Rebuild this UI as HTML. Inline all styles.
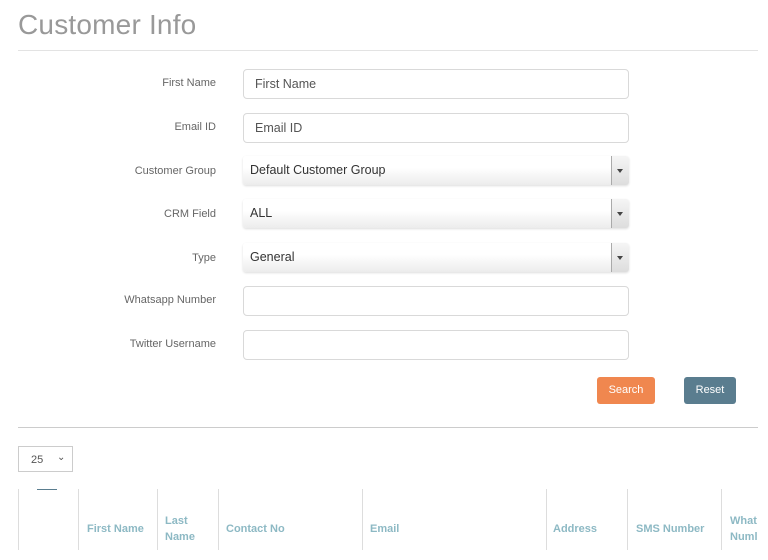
<!DOCTYPE html>
<html><head><style>
body{margin:0;width:768px;height:560px;overflow:hidden;background:#fff;font-family:"Liberation Sans",sans-serif;position:relative}
.a{position:absolute}
.t{left:18px;top:9px;font-size:28px;color:#999;font-weight:300;letter-spacing:.2px}
.hr{left:18px;width:740px;height:1px;background:#e3e3e3}
.lb{width:216px;text-align:right;font-size:11px;color:#666;left:0}
.in{left:243px;width:386px;height:30px;border:1px solid #d9d9d9;border-radius:4px;box-sizing:border-box;font-size:12.5px;color:#555;padding:7px 11px}
.sel{left:243px;width:386px;height:29px;border-radius:3px;background:linear-gradient(#fff 40%,#ececec);box-shadow:0 1px 2px #ddd;font-size:12.5px;color:#333;padding:7px 7px;box-sizing:border-box}
.ar{position:absolute;right:0;top:0;width:17px;height:29px;border-left:1px solid #aaa;background:linear-gradient(#f5f5f5,#ddd);border-radius:0 3px 3px 0}
.ar:after{content:"";position:absolute;left:5px;top:13px;border:3.5px solid transparent;border-top:4px solid #444}
.btn{height:27px;border-radius:3px;color:#fff;font-size:11px;text-align:center;line-height:26px}
.v{top:489px;width:1px;height:61px;background:#ddd}
.h{top:513px;font-size:11px;font-weight:bold;color:#8db9c4;line-height:16px}
</style></head><body>
<div class="a t">Customer Info</div>
<div class="a hr" style="top:50px"></div>
<div class="a lb" style="top:77px">First Name</div><div class="a in" style="top:69px">First Name</div>
<div class="a lb" style="top:121px">Email ID</div><div class="a in" style="top:113px">Email ID</div>
<div class="a lb" style="top:165px">Customer Group</div><div class="a sel" style="top:156px">Default Customer Group<div class="ar"></div></div>
<div class="a lb" style="top:208px">CRM Field</div><div class="a sel" style="top:199px">ALL<div class="ar"></div></div>
<div class="a lb" style="top:252px">Type</div><div class="a sel" style="top:243px">General<div class="ar"></div></div>
<div class="a lb" style="top:294px">Whatsapp Number</div><div class="a in" style="top:286px"></div>
<div class="a lb" style="top:338px">Twitter Username</div><div class="a in" style="top:330px"></div>
<div class="a btn" style="left:597px;top:377px;width:58px;background:#f0874f">Search</div>
<div class="a btn" style="left:684px;top:377px;width:52px;background:#5a7d8f">Reset</div>
<div class="a hr" style="top:427px;background:#ccc"></div>
<div class="a" style="left:18px;top:446px;width:55px;height:26px;border:1px solid #ccc;box-sizing:border-box;font-size:11px;color:#555;padding:7px 0 0 12px">25<span style="position:absolute;left:38px;top:5px;font-size:10px;color:#555">&#8964;</span></div>
<div class="a" style="left:37px;top:489px;width:20px;height:1px;background:#5a7d8f"></div>
<div class="a v" style="left:18px"></div><div class="a v" style="left:78px"></div><div class="a v" style="left:157px"></div><div class="a v" style="left:218px"></div><div class="a v" style="left:362px"></div><div class="a v" style="left:546px"></div><div class="a v" style="left:627px"></div><div class="a v" style="left:721px"></div>
<div class="a h" style="left:87px;top:521px">First Name</div>
<div class="a h" style="left:165px">Last<br>Name</div>
<div class="a h" style="left:226px;top:521px">Contact No</div>
<div class="a h" style="left:370px;top:521px">Email</div>
<div class="a h" style="left:553px;top:521px">Address</div>
<div class="a h" style="left:636px;top:521px">SMS Number</div>
<div class="a h" style="left:730px;white-space:nowrap">What<br>Numl</div>
</body></html>
